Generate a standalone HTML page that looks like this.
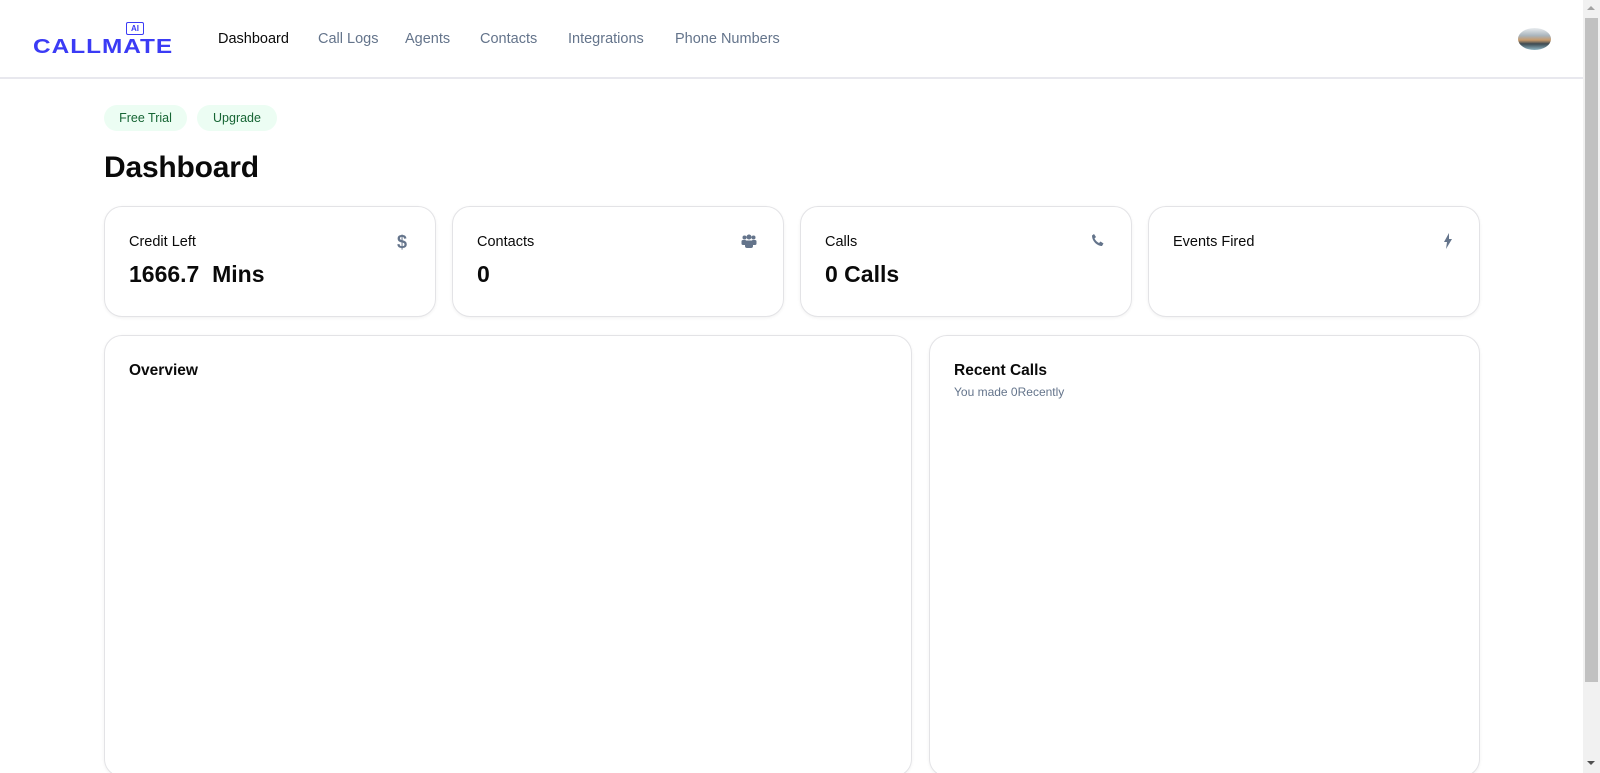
<!DOCTYPE html>
<html style="overflow:hidden;height:773px"><head><style>
*{box-sizing:border-box;margin:0;padding:0}
body{width:1600px;height:773px;overflow:hidden;background:#fff;font-family:"Liberation Sans",sans-serif;color:#0a0a0a;position:relative}
.hdr{position:absolute;left:0;top:0;width:1583px;height:79px;border-bottom:2px solid #e8e8ee}
.nav a{position:absolute;top:31px;font-size:14.5px;color:#64748b;text-decoration:none}
.pill{position:absolute;top:105px;height:26px;border-radius:13px;background:#ecfdf3;color:#166534;font-size:12.5px;line-height:26px;text-align:center}
h1{position:absolute;left:104px;top:151px;font-size:30px;font-weight:700;letter-spacing:-0.2px}
.card{position:absolute;top:206px;width:332px;height:111px;border:1px solid #e3e3e6;border-radius:18px;box-shadow:0 1px 3px rgba(0,0,0,.06)}
.card .l{position:absolute;left:24px;top:27px;font-size:14.5px}
.card .v{position:absolute;left:24px;top:54px;font-size:23px;font-weight:700}
.card svg{position:absolute;right:26px;top:26px}
.big{position:absolute;top:335px;height:442px;border:1px solid #e3e3e6;border-radius:18px;box-shadow:0 1px 3px rgba(0,0,0,.06)}
.big .t{position:absolute;left:24px;top:26px;font-size:15.5px;font-weight:700}
.sb{position:absolute;left:1583px;top:0;width:17px;height:773px;background:#f1f1f1}
</style></head><body>
<div class="hdr">
 <div style="position:absolute;left:33px;top:36px;font-size:20px;font-weight:900;color:#3b3bf5;letter-spacing:0.8px;transform:scaleX(1.22);transform-origin:left">CALLMATE</div>
 <div style="position:absolute;left:126px;top:22px;width:18px;height:13px;border:1px solid #3b3bf5;border-radius:2px;font-size:8px;font-weight:700;color:#3b3bf5;text-align:center;line-height:11px">AI</div>
 <div class="nav">
  <a style="left:218px;color:#0a0a0a">Dashboard</a>
  <a style="left:318px">Call Logs</a>
  <a style="left:405px">Agents</a>
  <a style="left:480px">Contacts</a>
  <a style="left:568px">Integrations</a>
  <a style="left:675px">Phone Numbers</a>
 </div>
 <div style="position:absolute;left:1518px;top:28px;width:33px;height:22px;border-radius:50%;background:linear-gradient(#e8ecef 0%,#a9b4bc 35%,#c89a6a 55%,#3d4a52 72%,#8fb6c4 100%)"></div>
</div>
<div class="pill" style="left:104px;width:83px">Free Trial</div>
<div class="pill" style="left:197px;width:80px">Upgrade</div>
<h1>Dashboard</h1>
<div class="card" style="left:104px"><div class="l">Credit Left</div><div class="v">1666.7&nbsp; Mins</div><svg width="12" height="18" viewBox="0 0 12 18"><text x="0" y="15" font-size="18" font-weight="700" fill="#64748b" font-family="Liberation Sans">$</text></svg></div>
<div class="card" style="left:452px"><div class="l">Contacts</div><div class="v">0</div><svg width="16" height="16" viewBox="0 0 16 16" fill="#64748b"><circle cx="3.5" cy="4.5" r="2"/><circle cx="12.5" cy="4.5" r="2"/><circle cx="8" cy="4" r="2.5"/><rect x="0.5" y="7" width="5" height="5" rx="1.5"/><rect x="10.5" y="7" width="5" height="5" rx="1.5"/><rect x="4" y="7.5" width="8" height="7.5" rx="2"/></svg></div>
<div class="card" style="left:800px"><div class="l">Calls</div><div class="v">0 Calls</div><svg width="14" height="14" viewBox="0 0 14 14"><path d="M3 1l2 3-1.5 1.5c1 2 2.5 3.5 4.5 4.5L9.5 8.5l3 2-1.5 2.5C6 13 1 8 1 2.5z" fill="#64748b"/></svg></div>
<div class="card" style="left:1148px"><div class="l">Events Fired</div><svg width="10" height="16" viewBox="0 0 10 16"><path d="M6 0L1 9h3l-1 7 6-10H6z" fill="#64748b"/></svg></div>
<div class="big" style="left:104px;width:808px"><div class="t">Overview</div></div>
<div class="big" style="left:929px;width:551px"><div class="t">Recent Calls</div><div style="position:absolute;left:24px;top:49px;font-size:12px;color:#64748b">You made 0Recently</div></div>
<div class="sb"><div style="position:absolute;left:2px;top:18px;width:13px;height:664px;background:#c1c1c1"></div>
<div style="position:absolute;left:4px;top:761px;border-left:4px solid transparent;border-right:4px solid transparent;border-top:4px solid #505050"></div>
<div style="position:absolute;left:4px;top:6px;border-left:4px solid transparent;border-right:4px solid transparent;border-bottom:4px solid #a3a3a3"></div></div>
</body></html>
